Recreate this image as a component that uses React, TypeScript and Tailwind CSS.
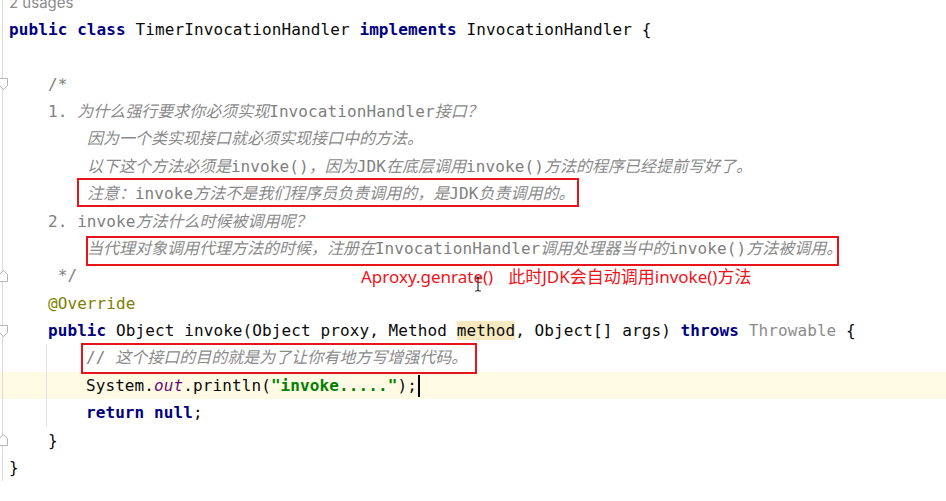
import React from "react";

const K = ({ children }: { children: React.ReactNode }) => (
  <span className="font-bold text-[#000080]">{children}</span>
);
const G = ({ children }: { children: React.ReactNode }) => (
  <span className="text-[#808080]">{children}</span>
);
const I = ({ children }: { children: React.ReactNode }) => (
  <span className="italic tracking-normal text-[#8a8a8a]">{children}</span>
);

function FoldStart() {
  return (
    <svg width="11" height="14" viewBox="0 0 11 14" className="absolute left-[-2px] top-1/2 -translate-y-1/2">
      <path d="M1.5 1.5 H9.5 V8.5 L5.5 12.5 L1.5 8.5 Z" fill="#ffffff" stroke="#b4b4b4" strokeWidth="1" />
    </svg>
  );
}
function FoldEnd() {
  return (
    <svg width="11" height="14" viewBox="0 0 11 14" className="absolute left-[-2px] top-1/2 -translate-y-1/2">
      <path d="M1.5 12.5 H9.5 V5.5 L5.5 1.5 L1.5 5.5 Z" fill="#ffffff" stroke="#b4b4b4" strokeWidth="1" />
    </svg>
  );
}

function Row({
  children,
  fold,
  current,
  guide,
}: {
  children?: React.ReactNode;
  fold?: "start" | "end";
  current?: boolean;
  guide?: boolean;
}) {
  return (
    <div className={`flex h-[27.375px] ${current ? "bg-[#fffae3]" : ""}`}>
      <div className="relative w-[9px] shrink-0 pl-[2px]">
        <div className="h-full border-l border-[#dadada]" />
        {fold === "start" && <FoldStart />}
        {fold === "end" && <FoldEnd />}
      </div>
      <div className="block h-full whitespace-pre text-[16px] leading-[27.375px] tracking-[0.1px] text-[#0a0a0a] font-['DejaVu_Sans_Mono','Noto_Sans_CJK_SC',monospace]">
        {guide && <span className="inline-block h-[27.375px] w-[38px] border-r border-[#e2e2e2] align-top" />}
        {children}
      </div>
    </div>
  );
}

export default function App() {
  return (
    <div className="relative h-[501px] w-[946px] overflow-hidden bg-white">
      <div className="mt-[-11.4px] flex flex-col">
        <div className="flex h-[27.375px]">
          <div className="w-[9px] shrink-0 pl-[2px]">
            <div className="h-full border-l border-[#dadada]" />
          </div>
          <div className="text-[15px] leading-[27.375px] text-[#8c8c8c] font-['Inter',sans-serif]">
            2 usages
          </div>
        </div>
        <Row>
          <K>public</K>{" "}<K>class</K> TimerInvocationHandler <K>implements</K> InvocationHandler {"{"}
        </Row>
        <Row />
        <Row fold="start">
          {"    "}
          <G>/*</G>
        </Row>
        <Row>
          {"    "}
          <G>1. </G>
          <I>为什么强行要求你必须实现</I>
          <G>InvocationHandler</G>
          <I>接口？</I>
        </Row>
        <Row>
          {"        "}
          <I>因为一个类实现接口就必须实现接口中的方法。</I>
        </Row>
        <Row>
          {"        "}
          <I>以下这个方法必须是</I>
          <G>invoke()</G>
          <I>，因为</I>
          <G>JDK</G>
          <I>在底层调用</I>
          <G>invoke()</G>
          <I>方法的程序已经提前写好了。</I>
        </Row>
        <Row>
          {"        "}
          <I>注意：</I>
          <G>invoke</G>
          <I>方法不是我们程序员负责调用的，是</I>
          <G>JDK</G>
          <I>负责调用的。</I>
        </Row>
        <Row>
          {"    "}
          <G>2. invoke</G>
          <I>方法什么时候被调用呢？</I>
        </Row>
        <Row>
          {"        "}
          <I>当代理对象调用代理方法的时候，注册在</I>
          <G>InvocationHandler</G>
          <I>调用处理器当中的</I>
          <G>invoke()</G>
          <I>方法被调用。</I>
        </Row>
        <Row fold="end">
          {"     "}
          <G>*/</G>
        </Row>
        <Row>
          {"    "}
          <span className="text-[#808000]">@Override</span>
        </Row>
        <Row fold="start">
          {"    "}
          <K>public</K>{" Object invoke(Object proxy, Method "}
          <span className="bg-[#f6e9c0]">method</span>
          {", Object[] args) "}
          <K>throws</K>{" "}
          <span className="text-[#8c8c8c]">Throwable</span>
          {" {"}
        </Row>
        <Row guide>
          {"    "}
          <G>// </G>
          <I>这个接口的目的就是为了让你有地方写增强代码。</I>
        </Row>
        <Row guide current>
          {"    System."}
          <span className="italic text-[#660e7a]">out</span>
          {".println("}
          <span className="font-bold text-[#008000]">"invoke....."</span>
          {");"}
          <span className="ml-[1px] inline-block h-[22px] w-[2px] bg-black align-middle" />
        </Row>
        <Row guide>
          {"    "}
          <K>return</K>{" "}<K>null</K>;
        </Row>
        <Row fold="end">
          {"    }"}
        </Row>
        <Row>{"}"}</Row>
      </div>

      {/* annotations */}
      <div className="absolute left-[77px] top-[178px] h-[29px] w-[502px] border-2 border-[#e8141c]" />
      <div className="absolute left-[86px] top-[236px] h-[30px] w-[753px] border-2 border-[#e8141c]" />
      <div className="absolute left-[81px] top-[343px] h-[31px] w-[396px] border-2 border-[#e8141c]" />

      <div className="absolute left-[361px] top-[264px] flex items-center whitespace-pre text-[17px] leading-[26px] text-[#f0131c] font-['Noto_Sans','Noto_Sans_CJK_SC',sans-serif]">
        <span>Aproxy.genrate()</span>
        <span className="ml-[15px]">此时JDK会自动调用invoke()方法</span>
      </div>

      <svg width="8" height="16" viewBox="0 0 8 16" className="absolute left-[474px] top-[276px]">
        <path d="M1 1 H3 L4 2 L5 1 H7 M4 2 V14 M1 15 H3 L4 14 L5 15 H7" fill="none" stroke="#333" strokeWidth="1.2" />
      </svg>
    </div>
  );
}
